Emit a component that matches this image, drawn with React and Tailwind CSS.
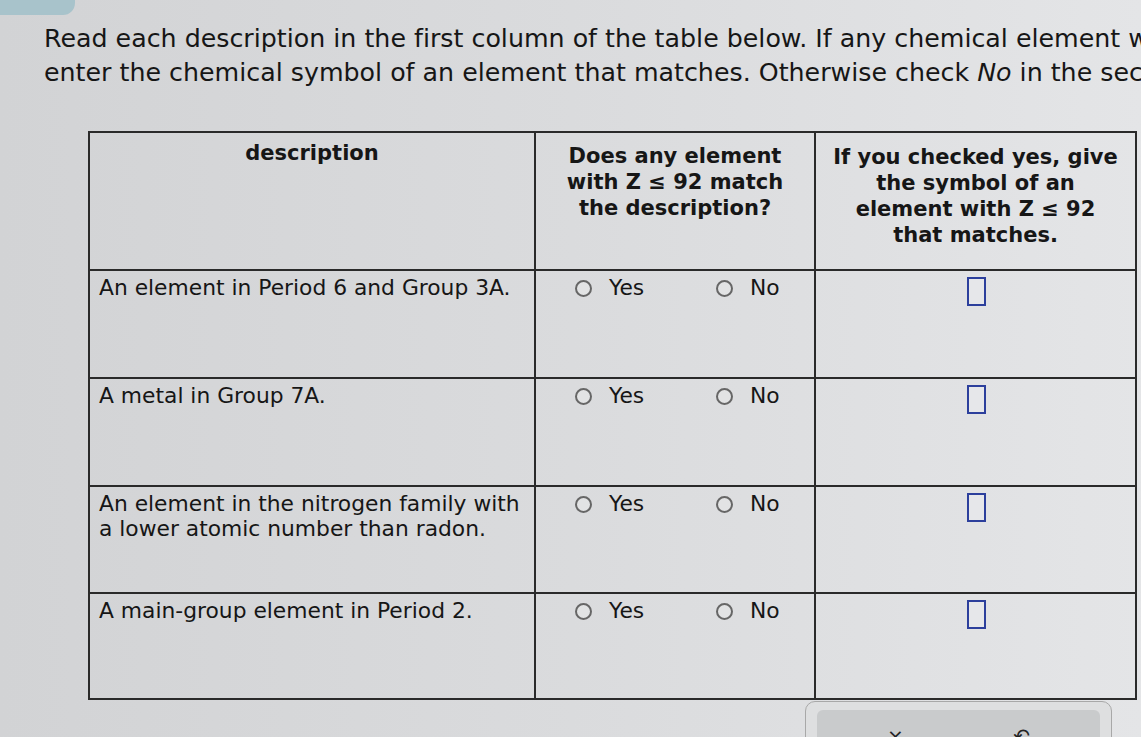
import React from "react";

const rows = [
  "An element in Period 6 and Group 3A.",
  "A metal in Group 7A.",
  "An element in the nitrogen family with a lower atomic number than radon.",
  "A main-group element in Period 2.",
];

const rowHeights = ["h-[108px]", "h-[108px]", "h-[107px]", "h-[106px]"];

function Radio({ label, className }) {
  return (
    <label className={`flex items-center gap-[17px] ${className || ""}`}>
      <span className="w-[17px] h-[17px] rounded-full border-2 border-[#666] bg-[#e2e3e4]" />
      <span>{label}</span>
    </label>
  );
}

export default function App() {
  return (
    <div
      className="relative w-[1141px] h-[737px] overflow-hidden bg-gradient-to-r from-[#d2d3d5] via-[#dadbdd] to-[#e4e5e7] text-[#161616] [font-variant-ligatures:none]"
      style={{ fontFamily: '"DejaVu Sans", Verdana, sans-serif' }}
    >
      <div className="w-[75px] h-[15px] rounded-br-[12px] bg-[#a8c3cb]" />

      <div className="pl-[44px] pt-[7px] text-[25.3px] leading-[34px] whitespace-nowrap">
        <p>
          Read each description in the first column of the table below. If any chemical element with
        </p>
        <p>
          enter the chemical symbol of an element that matches. Otherwise check <i>No</i> in the second column.
        </p>
      </div>

      <div className="ml-[88px] mt-[41px] w-[1049px] border-2 border-[#2a2a2a] text-[21.8px]">
        <div className="grid grid-cols-[446px_280px_1fr] h-[136px] font-bold text-[21px] leading-[26px] text-center">
          <div className="pt-[7px] border-r-2 border-[#2a2a2a]">description</div>
          <div className="pt-[10px] px-[18px] border-r-2 border-[#2a2a2a]">
            Does any element with Z ≤ 92 match the description?
          </div>
          <div className="pt-[11px] px-[12px]">
            If you checked yes, give the symbol of an element with Z ≤ 92 that matches.
          </div>
        </div>

        {rows.map((text, i) => (
          <div
            key={i}
            className={`grid grid-cols-[446px_280px_1fr] border-t-2 border-[#2a2a2a] ${rowHeights[i]}`}
          >
            <div className="pl-[9px] pr-[8px] pt-[4px] leading-[25px] border-r-2 border-[#2a2a2a]">
              {text}
            </div>
            <div className="pl-[39px] pt-[4px] flex items-start leading-[26px] border-r-2 border-[#2a2a2a]">
              <Radio label="Yes" className="w-[141px]" />
              <Radio label="No" />
            </div>
            <div className="flex justify-center pt-[6px] pl-[2px]">
              <div className="w-[19px] h-[29px] border-2 border-[#2c3f9c] bg-[#e6e7ea]" />
            </div>
          </div>
        ))}
      </div>

      <div className="ml-[805px] mt-[1px] w-[307px] h-[50px] rounded-t-[10px] border border-[#a8a8a8] bg-[#dedfe0] px-[11px] pt-[8px]">
        <div className="h-full rounded-t-[6px] bg-[#c9cbcc] flex items-start justify-between px-[70px] pt-[16px] text-[20px] leading-none text-[#222]">
          <span>×</span>
          <span>↶</span>
        </div>
      </div>
    </div>
  );
}
